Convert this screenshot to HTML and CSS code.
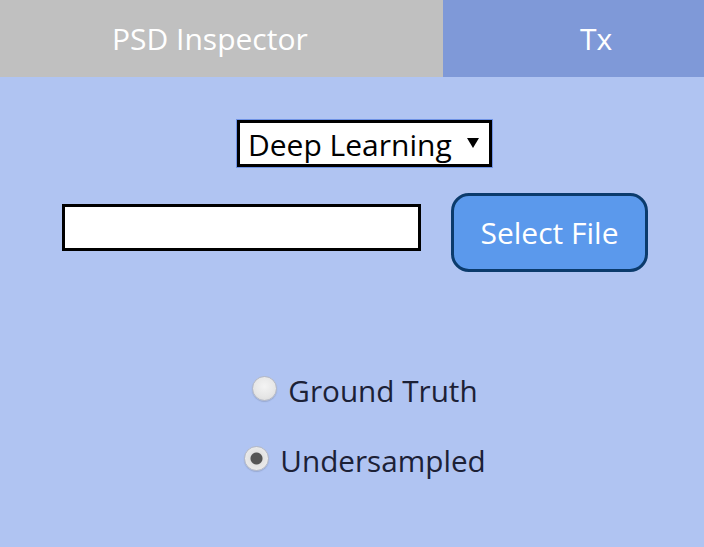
FILE: index.html
```html
<!DOCTYPE html>
<html>
<head>
<meta charset="utf-8">
<link rel="stylesheet" href="styles.css">
</head>
<body>
<div class="tabs">
  <div class="tab tab-psd">PSD Inspector</div>
  <div class="tab tab-tx">Tx</div>
</div>
<main class="panel">
  <div class="select-wrap">
    <select class="method">
      <option>Deep Learning</option>
    </select>
  </div>
  <div class="file-row">
    <input class="file-name" type="text">
    <button class="select-file">Select File</button>
  </div>
  <div class="radios">
    <label class="radio-row"><input type="radio" name="src" class="radio"><span>Ground Truth</span></label>
    <label class="radio-row"><input type="radio" name="src" class="radio" checked><span>Undersampled</span></label>
  </div>
</main>
</body>
</html>
```
FILE: styles.css
```css
html, body {
  margin: 0;
  padding: 0;
  height: 100%;
}
body {
  font-family: "Open Sans", "Noto Sans", sans-serif;
  background: #b0c4f2;
  width: 704px;
  height: 547px;
  overflow: hidden;
}
.tabs {
  display: flex;
  height: 77px;
}
.tab {
  color: #ffffff;
  font-size: 30px;
  line-height: 77px;
  box-sizing: border-box;
}
.tab-psd {
  width: 443px;
  background: #c0c0c0;
  padding-left: 112px;
}
.tab-tx {
  flex: 1;
  background: #7f99d8;
  padding-left: 137px;
}
.panel {
  display: flex;
  flex-direction: column;
  align-items: flex-start;
  height: 470px;
  background: #b0c4f2;
}
.select-wrap {
  position: relative;
  margin-top: 43px;
  margin-left: 237px;
}
.select-wrap::after {
  content: "";
  position: absolute;
  right: 13px;
  top: 18px;
  width: 0;
  height: 0;
  border-left: 6px solid transparent;
  border-right: 6px solid transparent;
  border-top: 10px solid #000;
}
.method {
  -webkit-appearance: none;
  appearance: none;
  box-sizing: border-box;
  width: 255px;
  height: 47px;
  border: 3px solid #000;
  border-radius: 0;
  outline: 1px solid #6f93e6;
  background: #fff;
  color: #000;
  font-family: "Open Sans", "Noto Sans", sans-serif;
  font-size: 30px;
  line-height: 38px;
  padding: 2px 0 0 8px;
  margin: 0;
}
.file-row {
  display: flex;
  align-items: flex-start;
  gap: 30px;
  margin-top: 26px;
  margin-left: 62px;
}
.file-name {
  box-sizing: border-box;
  width: 359px;
  height: 47px;
  margin: 11px 0 0 0;
  border: 3px solid #000;
  border-radius: 0;
  background: #fff;
  outline: none;
}
.select-file {
  box-sizing: border-box;
  width: 197px;
  height: 79px;
  margin: 0;
  border: 3px solid #0b3b6c;
  border-radius: 18px;
  background: #5b99ec;
  color: #fff;
  font-family: "Open Sans", "Noto Sans", sans-serif;
  font-size: 30px;
  padding: 0;
}
.radios {
  box-sizing: border-box;
  width: 704px;
  padding-left: 26px;
  margin-top: 96px;
  display: flex;
  flex-direction: column;
  align-items: center;
  gap: 30px;
}
.radio-row {
  display: flex;
  align-items: center;
  height: 40px;
  font-size: 29.7px;
  color: #1c2136;
}
.radio-row span {
  position: relative;
  top: 2px;
}
.radio {
  -webkit-appearance: none;
  appearance: none;
  box-sizing: border-box;
  width: 25px;
  height: 25px;
  margin: 0 11px 0 0;
  border-radius: 50%;
  border: 1px solid #b4b8c4;
  background: radial-gradient(circle at 50% 40%, #f4f4f4 0%, #e6e6e6 60%, #d6d6d6 100%);
  box-shadow: 0 1px 1px rgba(80, 90, 120, 0.25);
}
.radio:checked {
  background: radial-gradient(circle, #555555 0 5.5px, #e2e2e2 6.5px, #f2f2f2 100%);
}
```
